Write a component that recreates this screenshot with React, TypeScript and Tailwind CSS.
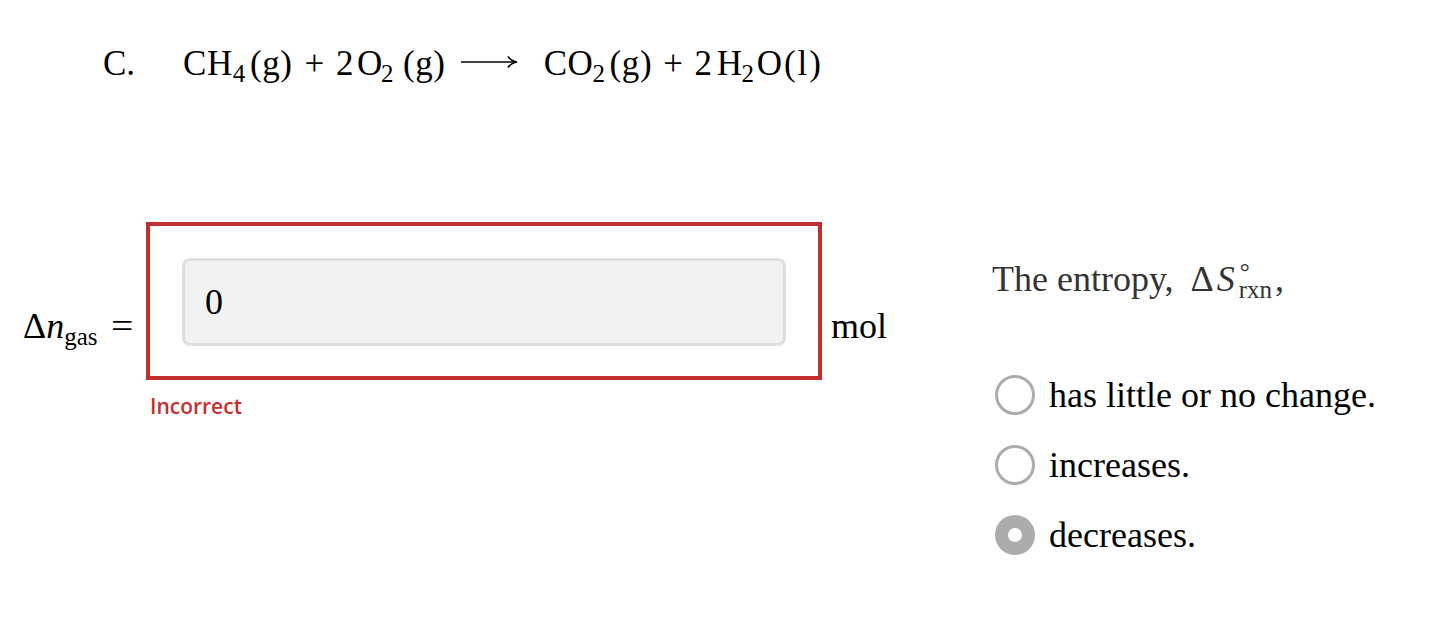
import React from "react";

const serif = { fontFamily: '"Liberation Serif", "DejaVu Serif", serif' };

function Sub({ children, className = "" }: { children: React.ReactNode; className?: string }) {
  return (
    <span className={"relative top-[7px] inline-block text-[25px] leading-none " + className}>{children}</span>
  );
}

function Radio({ selected }: { selected?: boolean }) {
  if (selected) {
    return (
      <span className="flex h-[40px] w-[40px] shrink-0 items-center justify-center rounded-full bg-[#acacac]">
        <span className="h-[14px] w-[14px] rounded-full bg-white" />
      </span>
    );
  }
  return (
    <span className="h-[40px] w-[40px] shrink-0 rounded-full border-[3px] border-[#acacac] bg-white" />
  );
}

function Arrow() {
  return (
    <svg width="57" height="20" viewBox="0 0 57 20" className="ml-[15px] inline-block align-[3px]">
      <line x1="0" y1="10" x2="55" y2="10" stroke="#000" strokeWidth="1.6" />
      <path d="M47 4.5 Q50 9 56 10 Q50 11 47 15.5" fill="none" stroke="#000" strokeWidth="1.6" />
    </svg>
  );
}

export default function App() {
  return (
    <div className="h-[628px] w-[1430px] overflow-hidden bg-white text-black" style={serif}>
      {/* Equation */}
      <div className="flex items-baseline pl-[103px] pt-[44px] text-[35px] leading-[40px]">
        <span className="w-[80px]">C.</span>
        <span className="whitespace-nowrap tracking-[0.6px]">
          <span>CH</span>
          <Sub>4</Sub>
          <span className="ml-[4px]">(g)</span>
          <span className="ml-[12px]">+</span>
          <span className="ml-[11px]">2</span>
          <span className="ml-[3px]">O</span>
          <Sub className="-ml-[2px]">2</Sub>
          <span className="ml-[9px]">(g)</span>
          <Arrow />
          <span className="ml-[26px]">CO</span>
          <Sub className="-ml-[1px]">2</Sub>
          <span className="ml-[4px]">(g)</span>
          <span className="ml-[11px]">+</span>
          <span className="ml-[11px]">2</span>
          <span className="ml-[4px]">H</span>
          <Sub className="-ml-[1px]">2</Sub>
          <span className="ml-[2px] tracking-[2px]">O(l)</span>
        </span>
      </div>

      {/* Answer row */}
      <div className="mt-[138px] flex items-start pl-[23px]">
        <div className="flex w-[967px] items-start">
          <div className="mt-[84px] flex w-[123px] shrink-0 items-baseline whitespace-nowrap text-[36px] leading-[40px]">
            <span>Δ</span>
            <span className="italic">n</span>
            <Sub>gas</Sub>
            <span className="ml-[15px] inline-block scale-x-110">=</span>
          </div>
          <div className="flex flex-col">
            <div className="h-[158px] w-[676px] border-[4px] border-[#c12e2e] px-[32px] pt-[32px]">
              <div className="flex h-[88px] items-center rounded-[8px] border-[3px] border-[#dedede] bg-[#f2f2f2] pl-[20px] text-[36px] leading-[40px]">
                0
              </div>
            </div>
            <div
              className="mt-[12px] pl-[4px] text-[21px] font-semibold leading-[28px] text-[#c62f2f]"
              style={{ fontFamily: '"Open Sans", sans-serif' }}
            >
              Incorrect
            </div>
          </div>
          <div className="ml-[9px] mt-[84px] text-[36px] leading-[40px]">mol</div>
        </div>

        <div className="flex flex-col pt-[37px]">
          <div className="whitespace-nowrap pl-[2px] text-[36px] leading-[40px] text-[#333]">
            The entropy,<span className="ml-[17px]">Δ</span>
            <span className="ml-[3px] italic">S</span>
            <span className="relative ml-[4px] inline-block text-[25px] leading-none">
              <span className="absolute -top-[11px] left-[1px]">°</span>
              <span className="relative top-[7px]">rxn</span>
            </span>
            <span className="ml-[3px]">,</span>
          </div>
          <div className="mt-[76px] flex flex-col gap-[30px] text-[36px] leading-[40px]">
            <div className="flex items-center gap-[14px] pl-[5px]">
              <Radio />
              <span>has little or no change.</span>
            </div>
            <div className="flex items-center gap-[14px] pl-[5px]">
              <Radio />
              <span>increases.</span>
            </div>
            <div className="flex items-center gap-[14px] pl-[5px]">
              <Radio selected />
              <span>decreases.</span>
            </div>
          </div>
        </div>
      </div>
    </div>
  );
}
